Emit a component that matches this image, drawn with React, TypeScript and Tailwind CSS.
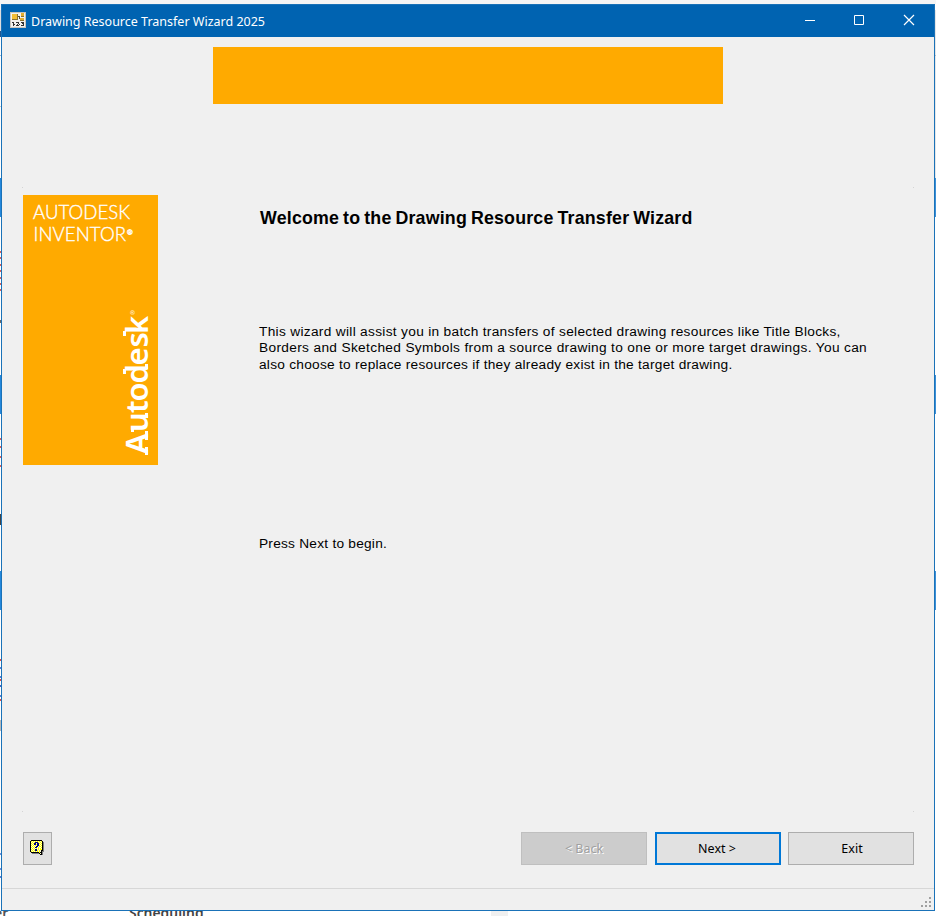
import type { ReactNode } from "react";

const leftMarks = [
  { top: 0, height: 10, color: "#f5f5f5" },
  { top: 10, height: 21, color: "#dedede" },
  { top: 31, height: 6, color: "#20568f" },
  { top: 55, height: 1, color: "#9fb8ce" },
  { top: 106, height: 1, color: "#cccccc" },
  { top: 178, height: 39, color: "#2488dc" },
  { top: 251, height: 2, color: "#d8605c" },
  { top: 257, height: 2, color: "#d8605c" },
  { top: 264, height: 2, color: "#d8605c" },
  { top: 270, height: 2, color: "#d8605c" },
  { top: 277, height: 2, color: "#d8605c" },
  { top: 283, height: 2, color: "#d8605c" },
  { top: 289, height: 2, color: "#d8605c" },
  { top: 320, height: 3, color: "#666666" },
  { top: 375, height: 39, color: "#2488dc" },
  { top: 438, height: 2, color: "#d8605c" },
  { top: 446, height: 2, color: "#d8605c" },
  { top: 456, height: 2, color: "#d8605c" },
  { top: 465, height: 2, color: "#d8605c" },
  { top: 514, height: 11, color: "#444444" },
  { top: 571, height: 39, color: "#2488dc" },
  { top: 659, height: 2, color: "#e0504a" },
  { top: 667, height: 2, color: "#5b7fd0" },
  { top: 676, height: 2, color: "#5b7fd0" },
  { top: 679, height: 2, color: "#e0504a" },
  { top: 685, height: 2, color: "#4466c0" },
  { top: 695, height: 2, color: "#5b7fd0" },
  { top: 699, height: 2, color: "#e0504a" },
  { top: 720, height: 11, color: "#b9b9b9" },
  { top: 853, height: 2, color: "#7090d8" },
  { top: 868, height: 2, color: "#7090d8" },
  { top: 876, height: 2, color: "#5b7fd0" },
];

const rightMarks = [
  { top: 10, height: 168, color: "#e6e6e6" },
  { top: 55, height: 1, color: "#b5bfc8" },
  { top: 178, height: 39, color: "#3a8fd8" },
  { top: 375, height: 39, color: "#3a8fd8" },
  { top: 571, height: 39, color: "#3a8fd8" },
];

const helpPixels = [
  ".###########..",
  "#YwYwYwYwYwY#.",
  "#wYwYBBBYwYw#g",
  "#YwYBBwBBYwY#g",
  "#wYwBBYBBwYw#g",
  "#YwYwYwBBYwY#g",
  "#wYwYwBBwYYw#g",
  "#YwYwBBwYwwY#g",
  "#wYwYwYwYwYw#g",
  "#YwYwBBwYwYY#g",
  "#wYwYBBYwYw##g",
  "#YwYwYwYwYw#gg",
  ".########Y##g.",
  "..ggggggg#w#g.",
  "..........##g.",
];

const pixelColors: Record<string, string> = {
  "#": "#000000",
  Y: "#ffff00",
  w: "#ffffcc",
  B: "#000080",
  g: "#808080",
};

function HelpIcon() {
  return (
    <svg
      width="14"
      height="15"
      viewBox="0 0 14 15"
      shapeRendering="crispEdges"
      className="mr-px mb-0.5"
    >
      {helpPixels.map((row, y) =>
        row.split("").map((c, x) =>
          c === "." ? null : (
            <rect key={`${x}-${y}`} x={x} y={y} width="1" height="1" fill={pixelColors[c]} />
          )
        )
      )}
    </svg>
  );
}

function AppIcon() {
  return (
    <svg width="16" height="16" viewBox="0 0 16 16" shapeRendering="crispEdges" className="mb-0.5">
      <rect width="16" height="16" fill="#c9c5bc" />
      <rect x="1" y="1" width="14" height="14" fill="#f4f2ee" />
      <rect x="2" y="2" width="6" height="6" fill="#8a7330" />
      <rect x="2" y="2" width="5" height="5" fill="#f2bd35" />
      <rect x="8" y="4" width="2" height="1" fill="#5d5030" />
      <rect x="9" y="4" width="1" height="3" fill="#5d5030" />
      <rect x="11" y="1" width="3" height="3" fill="#e5ad2c" />
      <rect x="11" y="4" width="3" height="1" fill="#8a7330" />
      <rect x="10" y="6" width="4" height="2" fill="#e5ad2c" />
      <rect x="10" y="8" width="4" height="1" fill="#8a7330" />
      <path
        d="M2 10h2v4h-1v-3h-1zM4 12h1v1h-1zM6 10h3v2h-1v1h1v1h-3v-1h1v-1h1v-1h-2zM9 12h1v1h-1zM11 10h3v4h-3v-1h2v-1h-1v-1h1h-2z"
        fill="#333333"
      />
    </svg>
  );
}

function InventorLogo() {
  return (
    <svg width="135" height="270" viewBox="0 0 135 270" className="bg-[#ffaa00]" fill="#ffffff">
      <g
        fontFamily='Lato, "Noto Sans", sans-serif'
        fontSize="18.6"
        fontWeight="300"
        stroke="#ffffff"
        strokeWidth="0.35"
      >
        <text x="10" y="24" textLength="97" lengthAdjust="spacing">AUTODESK</text>
        <text x="10.5" y="46" textLength="92.5" lengthAdjust="spacing">INVENTOR</text>
        <text x="104" y="40" fontSize="7" fontWeight="700">®</text>
      </g>
      <g transform="translate(125 260) rotate(-90)" fontFamily='"Noto Sans", sans-serif'>
        <text x="1 23 42 53.5 71.5 89.5 107.5 121" y="0" fontSize="31" fontWeight="600">
          Autodesk
        </text>
        <path d="M0 -3h8v3h-8zM15 -3h9v3h-9zM23 -17h5v3h-5zM37 -3h5v3h-5zM81 -25h5v3h-5zM86 -3h5v3h-5zM119 -25h5v3h-5z" />
        <text x="140" y="-13" fontSize="6">®</text>
      </g>
    </svg>
  );
}

function SideMarks({ marks }: { marks: typeof leftMarks }) {
  return (
    <svg width="1" height="916" shapeRendering="crispEdges">
      {marks.map((m) => (
        <rect key={m.top} y={m.top} width="1" height={m.height} fill={m.color} />
      ))}
    </svg>
  );
}

function WizardButton({ className, children }: { className: string; children: ReactNode }) {
  return (
    <button
      className={`flex h-[33px] w-[126px] items-center justify-center text-[12.5px] leading-4 ${className}`}
    >
      {children}
    </button>
  );
}

function CornerDots() {
  return (
    <div className="flex h-px justify-between px-5">
      <span className="w-px bg-[#d4d4d4]" />
      <span className="w-px bg-[#d4d4d4]" />
    </div>
  );
}

export default function App() {
  return (
    <div className="relative h-[916px] w-[936px] overflow-hidden bg-white pt-1 pl-px font-['Noto_Sans',sans-serif]">
      {/* Page behind the window */}
      <div className="absolute inset-0 flex justify-between">
        <SideMarks marks={leftMarks} />
        <SideMarks marks={rightMarks} />
      </div>
      <div className="absolute inset-x-0 top-0 h-1 bg-[#f5f5f5]" />
      <div className="absolute top-[903px] left-[-6px] text-[14px] leading-[19px] font-semibold text-[#555555]">
        er
      </div>
      <div className="absolute top-[903px] left-[129px] text-[13.9px] leading-[19px] font-semibold text-[#444444]">
        Scheduling
      </div>
      <div className="absolute top-[911px] left-[491px] h-[5px] w-[17px] bg-[#f0f0f0]" />

      {/* Window */}
      <div className="relative flex h-[907px] w-[934px] flex-col border border-[#1a72b8] bg-[#f0f0f0]">
        <header className="flex h-8 shrink-0 items-center bg-[#0063b1] pl-2 text-white">
          <AppIcon />
          <h1 className="mt-0.5 ml-[5px] text-[12.5px] leading-4 whitespace-nowrap">
            Drawing Resource Transfer Wizard 2025
          </h1>
          <svg
            width="110"
            height="12"
            viewBox="0 0 110 12"
            className="mr-[19px] mb-0.5 ml-auto"
            fill="none"
            stroke="currentColor"
          >
            <path d="M0 6.5h10" />
            <path d="M49.5 1.5h9v9h-9z" />
            <path d="M99 1l10 10M109 1l-10 10" strokeWidth="1.2" />
          </svg>
        </header>

        <div className="mx-auto mt-2.5 h-[57px] w-[510px] bg-[#ffaa00]" />
        <div className="mt-[83px]">
          <CornerDots />
        </div>

        <main className="mt-[7px] flex h-[616px] pl-[21px] font-['Liberation_Sans',sans-serif] text-black">
          <InventorLogo />
          <div className="ml-[101px] flex flex-col">
            <h2 className="mt-[13px] ml-px text-[17.8px] leading-5 font-bold tracking-[0.2px] whitespace-nowrap [word-spacing:-1.2px]">
              Welcome to the Drawing Resource Transfer Wizard
            </h2>
            <p className="mt-24 text-[13.7px] leading-[16.5px] tracking-[0.31px] whitespace-nowrap">
              <span className="block">
                This wizard will assist you in batch transfers of selected drawing resources like Title Blocks,
              </span>
              <span className="-mt-px block pb-px tracking-[0.34px]">
                Borders and Sketched Symbols from a source drawing to one or more target drawings. You can
              </span>
              <span className="block tracking-[0.26px]">
                also choose to replace resources if they already exist in the target drawing.
              </span>
            </p>
            <p className="mt-[162px] text-[13.7px] leading-[16.5px] tracking-[0.24px]">
              Press Next to begin.
            </p>
          </div>
        </main>
        <CornerDots />

        <footer className="mt-5 flex h-[33px] pr-5 pl-[21px]">
          <button className="flex w-[29px] items-center justify-center border border-[#adadad] bg-[#e1e1e1]">
            <HelpIcon />
          </button>
          <WizardButton className="mr-2 ml-auto border border-[#bfbfbf] bg-[#cccccc] text-[#a0a0a0] [text-shadow:1px_1px_0_#fff]">
            &lt; Back
          </WizardButton>
          <WizardButton className="mr-[7px] border-2 border-[#0078d7] bg-[#e1e1e1] pr-0.5">
            Next &gt;
          </WizardButton>
          <WizardButton className="border border-[#adadad] bg-[#e1e1e1]">
            <span className="ml-0.5">Exit</span>
          </WizardButton>
        </footer>

        {/* Status bar with the resize grip */}
        <div className="mt-[23px] flex flex-1 items-end justify-end border-t border-[#d7d7d7] pr-0.5 pb-[2px]">
          <svg width="11" height="11" fill="#a0a0a0" shapeRendering="crispEdges">
            <path d="M8 0h2v2h-2zM4 4h2v2h-2zM8 4h2v2h-2zM0 8h2v2h-2zM4 8h2v2h-2zM8 8h2v2h-2z" />
          </svg>
        </div>
      </div>
    </div>
  );
}
